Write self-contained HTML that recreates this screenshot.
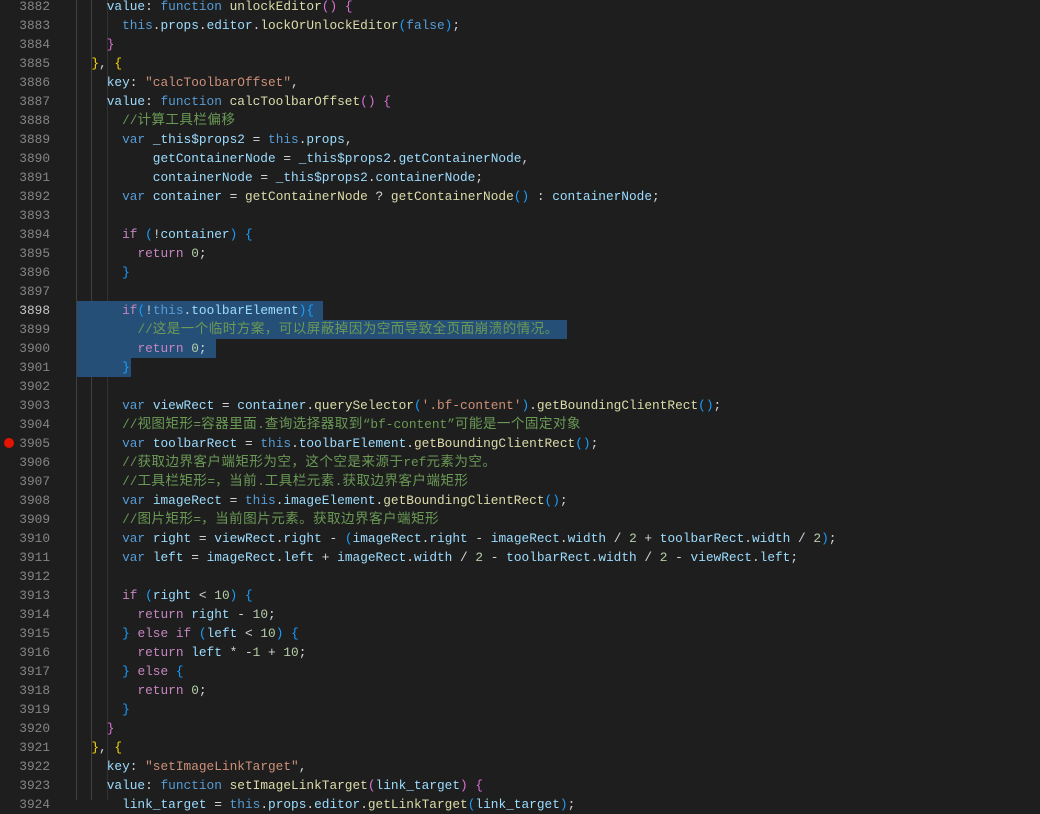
<!DOCTYPE html><html><head><meta charset="utf-8"><style>
body{margin:0;width:1040px;height:800px;background:#1e1e1e;overflow:hidden;position:relative;font-family:"Liberation Mono","Noto Sans CJK SC",monospace;font-size:12.8px}
.ln{position:absolute;left:0;width:50px;text-align:right;color:#858585;height:19px;line-height:19px}
.ln.a{color:#c6c6c6}
.l{position:absolute;left:76px;white-space:pre;height:19px;line-height:19px;color:#d4d4d4}
.sel{position:absolute;left:77px;height:19px;background:#264f78}
.g{position:absolute;top:0;width:1px;height:800px;background:#404040}
.k{color:#569cd6}.c{color:#c586c0}.v{color:#9cdcfe}.f{color:#dcdcaa}.s{color:#ce9178}.n{color:#b5cea8}.m{color:#6a9955}
.y{color:#ffd700}.p{color:#da70d6}.b{color:#179fff}
.z{font-family:"Noto Sans CJK SC",sans-serif;font-size:13.6px;letter-spacing:0.4px;line-height:1}
</style></head><body>
<div class="g" style="left:76px"></div><div class="g" style="left:91px"></div><div class="g" style="left:107px;background:#333"></div>
<div class="sel" style="top:301px;width:246px"></div>
<div class="sel" style="top:320px;width:490px"></div>
<div class="sel" style="top:339px;width:139px"></div>
<div class="sel" style="top:358px;width:54px"></div>
<div style="position:absolute;left:4px;top:438px;width:10px;height:10px;border-radius:50%;background:#e51400"></div>
<div id="c"></div>
<script>
var L=[
'    <span class="v">value</span>: <span class="k">function</span> <span class="f">unlockEditor</span><span class="p">()</span> <span class="p">{</span>',
'      <span class="k">this</span>.<span class="v">props</span>.<span class="v">editor</span>.<span class="f">lockOrUnlockEditor</span><span class="b">(</span><span class="k">false</span><span class="b">)</span>;',
'    <span class="p">}</span>',
'  <span class="y">}</span>, <span class="y">{</span>',
'    <span class="v">key</span>: <span class="s">"calcToolbarOffset"</span>,',
'    <span class="v">value</span>: <span class="k">function</span> <span class="f">calcToolbarOffset</span><span class="p">()</span> <span class="p">{</span>',
'      <span class="m">//计算工具栏偏移</span>',
'      <span class="k">var</span> <span class="v">_this$props2</span> = <span class="k">this</span>.<span class="v">props</span>,',
'          <span class="v">getContainerNode</span> = <span class="v">_this$props2</span>.<span class="v">getContainerNode</span>,',
'          <span class="v">containerNode</span> = <span class="v">_this$props2</span>.<span class="v">containerNode</span>;',
'      <span class="k">var</span> <span class="v">container</span> = <span class="f">getContainerNode</span> ? <span class="f">getContainerNode</span><span class="b">()</span> : <span class="v">containerNode</span>;',
'',
'      <span class="c">if</span> <span class="b">(</span>!<span class="v">container</span><span class="b">)</span> <span class="b">{</span>',
'        <span class="c">return</span> <span class="n">0</span>;',
'      <span class="b">}</span>',
'',
'      <span class="c">if</span><span class="b">(</span>!<span class="k">this</span>.<span class="v">toolbarElement</span><span class="b">){</span>',
'        <span class="m">//这是一个临时方案，可以屏蔽掉因为空而导致全页面崩溃的情况。</span>',
'        <span class="c">return</span> <span class="n">0</span>;',
'      <span class="b">}</span>',
'',
'      <span class="k">var</span> <span class="v">viewRect</span> = <span class="v">container</span>.<span class="f">querySelector</span><span class="b">(</span><span class="s">\'.bf-content\'</span><span class="b">)</span>.<span class="f">getBoundingClientRect</span><span class="b">()</span>;',
'      <span class="m">//视图矩形=容器里面.查询选择器取到“bf-content”可能是一个固定对象</span>',
'      <span class="k">var</span> <span class="v">toolbarRect</span> = <span class="k">this</span>.<span class="v">toolbarElement</span>.<span class="f">getBoundingClientRect</span><span class="b">()</span>;',
'      <span class="m">//获取边界客户端矩形为空，这个空是来源于ref元素为空。</span>',
'      <span class="m">//工具栏矩形=，当前.工具栏元素.获取边界客户端矩形</span>',
'      <span class="k">var</span> <span class="v">imageRect</span> = <span class="k">this</span>.<span class="v">imageElement</span>.<span class="f">getBoundingClientRect</span><span class="b">()</span>;',
'      <span class="m">//图片矩形=，当前图片元素。获取边界客户端矩形</span>',
'      <span class="k">var</span> <span class="v">right</span> = <span class="v">viewRect</span>.<span class="v">right</span> - <span class="b">(</span><span class="v">imageRect</span>.<span class="v">right</span> - <span class="v">imageRect</span>.<span class="v">width</span> / <span class="n">2</span> + <span class="v">toolbarRect</span>.<span class="v">width</span> / <span class="n">2</span><span class="b">)</span>;',
'      <span class="k">var</span> <span class="v">left</span> = <span class="v">imageRect</span>.<span class="v">left</span> + <span class="v">imageRect</span>.<span class="v">width</span> / <span class="n">2</span> - <span class="v">toolbarRect</span>.<span class="v">width</span> / <span class="n">2</span> - <span class="v">viewRect</span>.<span class="v">left</span>;',
'',
'      <span class="c">if</span> <span class="b">(</span><span class="v">right</span> &lt; <span class="n">10</span><span class="b">)</span> <span class="b">{</span>',
'        <span class="c">return</span> <span class="v">right</span> - <span class="n">10</span>;',
'      <span class="b">}</span> <span class="c">else</span> <span class="c">if</span> <span class="b">(</span><span class="v">left</span> &lt; <span class="n">10</span><span class="b">)</span> <span class="b">{</span>',
'        <span class="c">return</span> <span class="v">left</span> * -<span class="n">1</span> + <span class="n">10</span>;',
'      <span class="b">}</span> <span class="c">else</span> <span class="b">{</span>',
'        <span class="c">return</span> <span class="n">0</span>;',
'      <span class="b">}</span>',
'    <span class="p">}</span>',
'  <span class="y">}</span>, <span class="y">{</span>',
'    <span class="v">key</span>: <span class="s">"setImageLinkTarget"</span>,',
'    <span class="v">value</span>: <span class="k">function</span> <span class="f">setImageLinkTarget</span><span class="p">(</span><span class="v">link_target</span><span class="p">)</span> <span class="p">{</span>',
'      <span class="v">link_target</span> = <span class="k">this</span>.<span class="v">props</span>.<span class="v">editor</span>.<span class="f">getLinkTarget</span><span class="b">(</span><span class="v">link_target</span><span class="b">)</span>;'
];
var h='';
for(var i=0;i<L.length;i++){var t=-3+i*19;
var s=L[i].replace(/[\u3000-\u9fff\uff00-\uffef]+/g,function(x){return '<span class="z">'+x+'</span>';});
h+='<div class="ln'+(3882+i==3898?' a':'')+'" style="top:'+t+'px">'+(3882+i)+'</div>';
h+='<div class="l" style="top:'+t+'px">'+s+'</div>';}
document.getElementById('c').innerHTML=h;
</script>
</body></html>
